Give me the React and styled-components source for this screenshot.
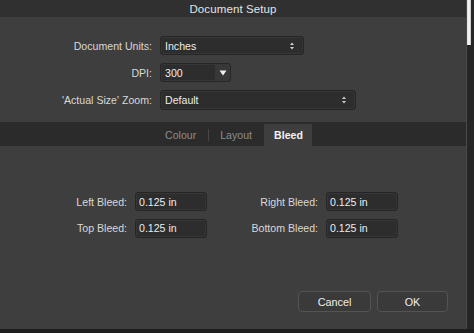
import React from 'react';
import styled, { createGlobalStyle } from 'styled-components';

const GlobalStyle = createGlobalStyle`
  html, body {
    margin: 0;
    padding: 0;
    background: #1f1f1f;
  }
  body {
    font-family: "Liberation Sans", Arial, sans-serif;
    font-size: 10.6px;
    -webkit-font-smoothing: antialiased;
  }
`;

const Screen = styled.div`
  width: 474px;
  height: 333px;
  display: flex;
  flex-direction: column;
  overflow: hidden;
`;

const Main = styled.div`
  display: flex;
  height: 329px;
`;

const Dialog = styled.div`
  width: 466px;
  display: flex;
  flex-direction: column;
  background: #3e3e3e;
  border-right: 1px solid #4a4a4a;
`;

const TitleBar = styled.div`
  height: 17px;
  display: flex;
  align-items: center;
  justify-content: center;
  background: #303030;
  color: #e4e4e4;
  font-size: 11.5px;
  letter-spacing: 0.1px;
`;

const TopForm = styled.div`
  display: grid;
  grid-template-columns: 152px auto;
  grid-auto-rows: 19px;
  column-gap: 8px;
  row-gap: 8px;
  padding: 19px 0 13px;
  align-items: center;
`;

const Label = styled.div`
  color: #d8d8d8;
  text-align: right;
  white-space: nowrap;
`;

const Field = styled.div`
  box-sizing: border-box;
  width: ${({ w }) => w}px;
  height: ${({ h }) => h || 19}px;
  display: flex;
  align-items: center;
  background: #2d2d2d;
  border: 1px solid #262626;
  box-shadow: inset 0 0 0 1px #363636;
  border-radius: 3px;
  color: #ececec;
  padding-left: ${({ pad }) => (pad === undefined ? 4 : pad)}px;
`;

const FieldText = styled.span`
  flex: 1;
`;

const Stepper = styled.svg`
  width: 6px;
  height: 10px;
  margin-right: 8px;
`;

const DropButton = styled.div`
  width: 15px;
  height: 100%;
  display: flex;
  align-items: center;
  justify-content: center;
  background: #383838;
  border-radius: 0 3px 3px 0;
`;

const TabBar = styled.div`
  height: 24px;
  display: flex;
  align-items: flex-end;
  background: #2b2b2b;
  padding-left: 153px;
`;

const Tab = styled.div`
  height: 22px;
  display: flex;
  align-items: center;
  padding: 0 ${({ padR }) => padR}px 0 ${({ padL }) => padL}px;
  color: ${({ active }) => (active ? '#f2f2f2' : '#8c8c8c')};
  background: ${({ active }) => (active ? '#3e3e3e' : 'transparent')};
  font-weight: ${({ active }) => (active ? 700 : 400)};
`;

const TabDivider = styled.div`
  width: 1px;
  height: 12px;
  margin-bottom: 5px;
  background: #474747;
`;

const BleedPanel = styled.div`
  flex: 1;
  display: flex;
  flex-direction: column;
`;

const BleedGrid = styled.div`
  display: grid;
  grid-template-columns: 127px 72px 103px 72px;
  grid-template-rows: 19px 20px;
  column-gap: 8px;
  row-gap: 7px;
  align-items: center;
  padding-top: 46px;
`;

const Footer = styled.div`
  margin-top: auto;
  display: flex;
  justify-content: flex-end;
  gap: 6px;
  padding: 0 18px 17px 0;
`;

const Button = styled.button`
  box-sizing: border-box;
  width: ${({ w }) => w}px;
  height: 21px;
  background: #3a3a3a;
  border: 1px solid #545454;
  border-radius: 4px;
  color: #efefef;
  font-family: inherit;
  font-size: 10.8px;
  padding: 0;
`;

const ScrollStrip = styled.div`
  flex: 1;
  background: #262626;
  display: flex;
  justify-content: flex-start;
`;

const ScrollThumb = styled.div`
  width: 4px;
  height: 45px;
  background: linear-gradient(to right, #d8d8d8, #ffffff 50%, #bdbdbd);
`;

const BottomStrip = styled.div`
  flex: 1;
  background: #1e1e1e;
`;

function UpDown() {
  return (
    <Stepper viewBox="0 0 6 10">
      <path d="M1 4 L3 1.5 L5 4 Z" fill="#d0d0d0" />
      <path d="M1 6 L3 8.5 L5 6 Z" fill="#d0d0d0" />
    </Stepper>
  );
}

function DownTriangle() {
  return (
    <svg width="8" height="6" viewBox="0 0 8 6">
      <path d="M0.5 0.5 H7.5 L4 5.5 Z" fill="#f0f0f0" />
    </svg>
  );
}

export default function App() {
  const bleeds = [
    ['Left Bleed:', 'Right Bleed:'],
    ['Top Bleed:', 'Bottom Bleed:'],
  ];
  return (
    <>
      <GlobalStyle />
      <Screen>
        <Main>
          <Dialog>
            <TitleBar>Document Setup</TitleBar>
            <TopForm>
              <Label>Document Units:</Label>
              <Field w={144}>
                <FieldText>Inches</FieldText>
                <UpDown />
              </Field>
              <Label>DPI:</Label>
              <Field w={71}>
                <FieldText>300</FieldText>
                <DropButton>
                  <DownTriangle />
                </DropButton>
              </Field>
              <Label>'Actual Size' Zoom:</Label>
              <Field w={196} h={20}>
                <FieldText>Default</FieldText>
                <UpDown />
              </Field>
            </TopForm>
            <TabBar>
              <Tab padL={12} padR={12}>Colour</Tab>
              <TabDivider />
              <Tab padL={11} padR={12}>Layout</Tab>
              <Tab active padL={10} padR={9}>Bleed</Tab>
            </TabBar>
            <BleedPanel>
              <BleedGrid>
                {bleeds.map(([left, right]) => (
                  <React.Fragment key={left}>
                    <Label>{left}</Label>
                    <Field w={72} h={19} pad={3}>0.125 in</Field>
                    <Label>{right}</Label>
                    <Field w={72} h={19} pad={3}>0.125 in</Field>
                  </React.Fragment>
                ))}
              </BleedGrid>
              <Footer>
                <Button w={73}>Cancel</Button>
                <Button w={71}>OK</Button>
              </Footer>
            </BleedPanel>
          </Dialog>
          <ScrollStrip>
            <ScrollThumb />
          </ScrollStrip>
        </Main>
        <BottomStrip />
      </Screen>
    </>
  );
}
